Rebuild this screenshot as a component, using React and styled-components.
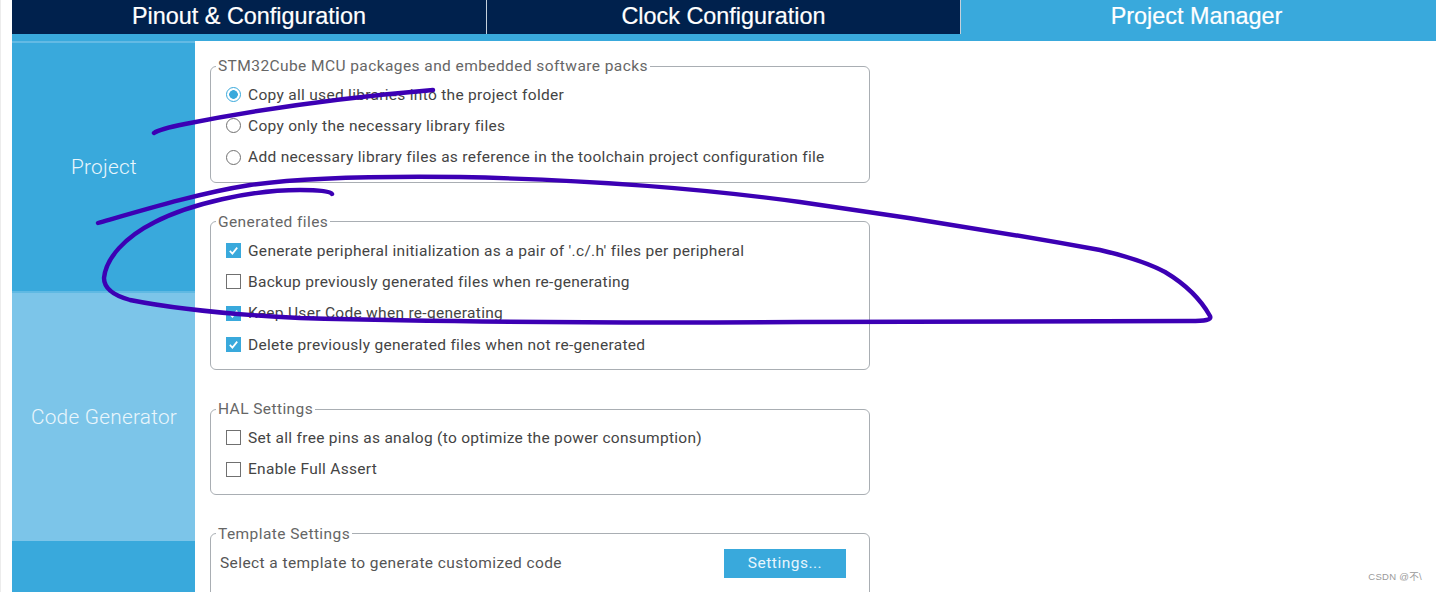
import React from "react";
import styled, { createGlobalStyle } from "styled-components";

const Global = createGlobalStyle`
  html, body { margin: 0; padding: 0; background: #fff; }
  body { font-family: "Liberation Sans", Arial, sans-serif; }
`;

const Page = styled.div`
  position: relative;
  width: 1436px;
  height: 592px;
  overflow: hidden;
  box-sizing: border-box;
  padding-left: 12px;
  background: linear-gradient(to right, #ececec 0, #ececec 1px, #fff 1px);
`;

const TabBar = styled.nav`
  display: grid;
  grid-template-columns: 475px 474px 475px;
  height: 41px;
  background: #39a9dc;
`;

const Tab = styled.div`
  box-sizing: border-box;
  height: ${(p) => (p.$active ? "41px" : "34px")};
  padding-bottom: ${(p) => (p.$active ? "9px" : "2px")};
  padding-right: ${(p) => (p.$active ? "4px" : "0")};
  display: flex;
  align-items: center;
  justify-content: center;
  background: ${(p) => (p.$active ? "#39a9dc" : "#00214d")};
  border-right: ${(p) => (p.$last ? "0" : "1px solid #c4d0dc")};
  color: #fff;
  font-size: 23.4px;
  -webkit-text-stroke: 0.2px #fff;
`;

const Body = styled.div`
  display: flex;
  align-items: flex-start;
`;

const Sidebar = styled.aside`
  width: 183px;
  height: 551px;
  flex: none;
  display: flex;
  flex-direction: column;
  background: #39a9dc;
`;

const SideItem = styled.div`
  box-sizing: border-box;
  height: ${(p) => p.$h}px;
  display: flex;
  align-items: center;
  justify-content: center;
  padding-left: 1px;
  background: ${(p) => (p.$active ? "#39a9dc" : "#7cc5e9")};
  border-top: 2px solid ${(p) => (p.$active ? "#63bae4" : "#5fb9e3")};
  color: #eaf6fc;
  font-family: Roboto, sans-serif;
  font-size: 20.8px;
  font-weight: 300;
  letter-spacing: 0.25px;
`;

const Main = styled.main`
  width: 660px;
  margin-left: 15px;
  padding-top: 16px;
  display: flex;
  flex-direction: column;
  gap: 30px;
  color: #444;
  font-family: Roboto, sans-serif;
`;

const Group = styled.fieldset`
  margin: 0;
  padding: 0;
  min-width: 0;
  border: 1px solid #a9aeb3;
  border-radius: 6px;
`;

const Legend = styled.legend`
  margin-left: 5px;
  padding: 0 2px;
  font-size: 15.5px;
  line-height: 18px;
  letter-spacing: 0.42px;
  color: #666;
`;

const Options = styled.div`
  display: flex;
  flex-direction: column;
  padding: 4px 15px 9px;
`;

const Option = styled.label`
  height: 31.33px;
  display: flex;
  align-items: center;
  gap: 7px;
  font-size: 15.5px;
  letter-spacing: 0.3px;
  white-space: nowrap;
`;

const Radio = styled.span`
  box-sizing: border-box;
  width: 15px;
  height: 15px;
  flex: none;
  border-radius: 50%;
  border: 1.5px solid ${(p) => (p.$on ? "#39a9dc" : "#707070")};
  background: ${(p) => (p.$on ? "radial-gradient(circle, #39a9dc 0 4px, #fff 4.6px)" : "#fff")};
`;

const Box = styled.span`
  box-sizing: border-box;
  width: 15px;
  height: 15px;
  flex: none;
  display: flex;
  border: 1px solid ${(p) => (p.$on ? "#39a9dc" : "#707070")};
  background: ${(p) => (p.$on ? "#39a9dc" : "#fff")};
`;

const TemplateRow = styled.div`
  display: flex;
  align-items: center;
  justify-content: space-between;
  padding: 6px 23px 40px 9px;
`;

const TemplateText = styled.span`
  font-size: 15.5px;
  letter-spacing: 0.41px;
  color: #555;
`;

const SettingsButton = styled.div`
  width: 122px;
  height: 29px;
  display: flex;
  align-items: center;
  justify-content: center;
  background: #39a9dc;
  color: #e6f5fc;
  font-size: 15.5px;
  letter-spacing: 0.5px;
`;

const Ink = styled.svg`
  position: absolute;
  inset: 0;
  width: 1436px;
  height: 592px;
  pointer-events: none;
`;

const Watermark = styled.span`
  position: absolute;
  right: 14px;
  bottom: 9px;
  font-family: "Liberation Sans", "Noto Sans CJK SC", sans-serif;
  font-size: 9.5px;
  letter-spacing: 0.3px;
  color: #9a9a9a;
`;

const Check = () => (
  <svg width="13" height="13" viewBox="0 0 13 13" fill="none">
    <path d="M2.8 6.8 5.4 9.6 10.2 3.6" stroke="#fff" strokeWidth="1.7" />
  </svg>
);

const RadioRow = ({ on, children }) => (
  <Option>
    <Radio $on={on} />
    {children}
  </Option>
);

const CheckRow = ({ on, children }) => (
  <Option>
    <Box $on={on}>{on && <Check />}</Box>
    {children}
  </Option>
);

export default function App() {
  return (
    <Page>
      <Global />
      <TabBar>
        <Tab>Pinout &amp; Configuration</Tab>
        <Tab>Clock Configuration</Tab>
        <Tab $active $last>Project Manager</Tab>
      </TabBar>
      <Body>
        <Sidebar>
          <SideItem $active $h={250}>Project</SideItem>
          <SideItem $h={250}>Code Generator</SideItem>
        </Sidebar>
        <Main>
          <Group>
            <Legend>STM32Cube MCU packages and embedded software packs</Legend>
            <Options>
              <RadioRow on>Copy all used libraries into the project folder</RadioRow>
              <RadioRow>Copy only the necessary library files</RadioRow>
              <RadioRow>Add necessary library files as reference in the toolchain project configuration file</RadioRow>
            </Options>
          </Group>
          <Group>
            <Legend>Generated files</Legend>
            <Options>
              <CheckRow on>Generate peripheral initialization as a pair of '.c/.h' files per peripheral</CheckRow>
              <CheckRow>Backup previously generated files when re-generating</CheckRow>
              <CheckRow on>Keep User Code when re-generating</CheckRow>
              <CheckRow on>Delete previously generated files when not re-generated</CheckRow>
            </Options>
          </Group>
          <Group>
            <Legend>HAL Settings</Legend>
            <Options>
              <CheckRow>Set all free pins as analog (to optimize the power consumption)</CheckRow>
              <CheckRow>Enable Full Assert</CheckRow>
            </Options>
          </Group>
          <Group>
            <Legend>Template Settings</Legend>
            <TemplateRow>
              <TemplateText>Select a template to generate customized code</TemplateText>
              <SettingsButton>Settings...</SettingsButton>
            </TemplateRow>
          </Group>
        </Main>
      </Body>
      <Ink viewBox="0 0 1436 592" fill="none" stroke="#3c00b4" strokeWidth="4.4" strokeLinecap="round" strokeLinejoin="round">
        <path d="M154 133C158 130 170 127 185 124C260 109 350 97 433 90" />
        <path d="M98 223C150 208 200 193 250 185C300 178 380 176 460 177C600 180 720 191 800 202C900 216 1000 232 1100 250C1130 257 1150 264 1165 272C1185 284 1200 298 1210 316C1212 320 1205 321 1190 321L800 322C640 323 480 323 300 318C220 314 160 306 130 300C112 295 104 288 104 278C106 258 125 237 155 222C190 204 250 190 300 190C318 190 330 191 332 194" />
      </Ink>
      <Watermark>CSDN @不\</Watermark>
    </Page>
  );
}
